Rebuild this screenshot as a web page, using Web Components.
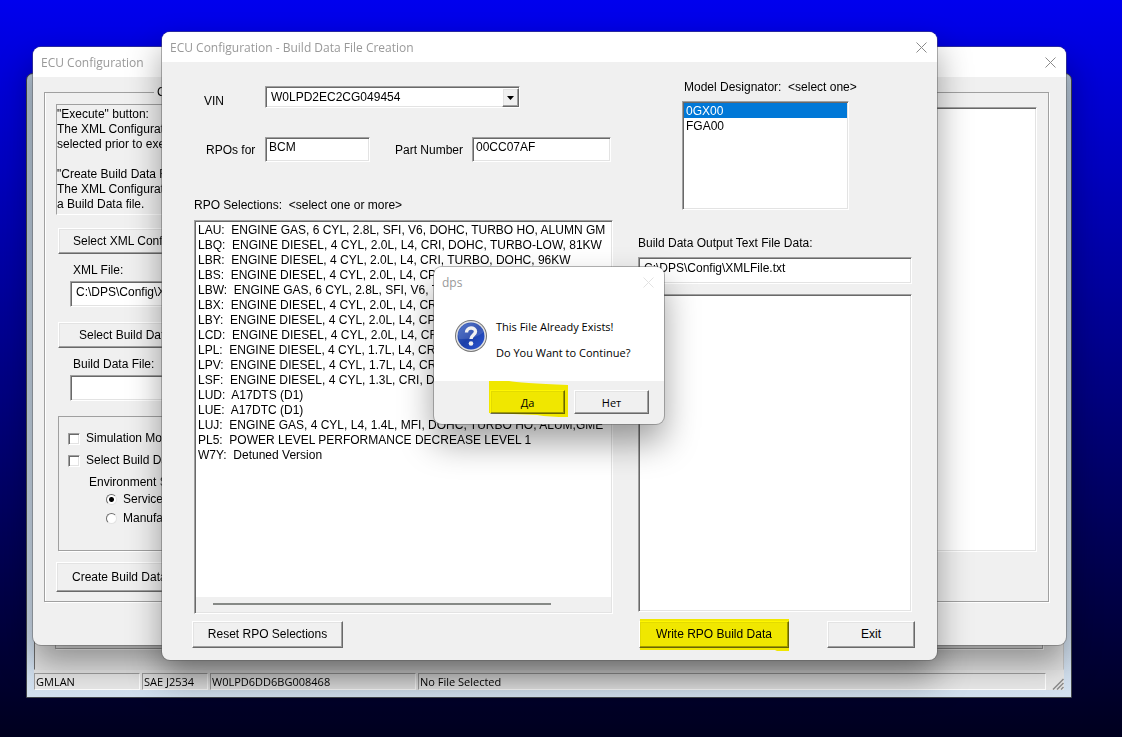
<!DOCTYPE html>
<html lang="en">
<head>
<meta charset="utf-8">
<title>ECU Configuration</title>
<style>
  body {
    margin: 0;
    font: 12px/15px "Liberation Sans", Arial, sans-serif;
    color: #000;
  }
</style>
</head>
<body>
<dps-desktop></dps-desktop>

<script>
// shared by every classic (pre-theme) control
const classic = /*css*/`
  * { box-sizing: border-box; }
  .sunken {
    border: 1px solid;
    border-color: #a0a0a0 #fff #fff #a0a0a0;
    box-shadow: inset 1px 1px 0 #696969, inset -1px -1px 0 #e3e3e3;
    background: #fff;
  }
  .raised {
    border: 1px solid;
    border-color: #fff #696969 #696969 #fff;
    box-shadow: inset -1px -1px 0 #a0a0a0, inset 1px 1px 0 #e3e3e3;
    background: #f0f0f0;
  }
  input, select, textarea, button {
    margin: 0;
    font: inherit;
    color: inherit;
    border-radius: 0;
    outline: none;
  }
  label { white-space: pre; }
`;

class AppWindow extends HTMLElement {
    constructor() {
        super();
        this.attachShadow({ mode: "open" });
        this.shadowRoot.innerHTML = /*html*/`
      <style>
        * { box-sizing: border-box; }
        :host {
          display: block;
          background: #f0f0f0;
          border-radius: 8px;
          box-shadow: 0 0 0 1px rgba(90, 90, 90, .45), 0 18px 34px rgba(0, 0, 0, .38);
        }
        header {
          display: flex;
          align-items: center;
          justify-content: space-between;
          height: 30px;
          padding: 0 8px;
          background: #fff;
          border-radius: 8px 8px 0 0;
          font-family: "Open Sans", "Noto Sans", sans-serif;
          color: #999;
        }
        h1 { margin: 0; font-size: 12px; font-weight: 400; }
        button {
          display: flex;
          padding: 0 2px;
          border: 0;
          background: none;
          color: var(--close, #8a8a8a);
        }
      </style>
      <header>
        <h1></h1>
        <button aria-label="Close">
          <svg width="11" height="11" viewBox="0 0 11 11" fill="none" stroke="currentColor">
            <path d="M.5.5l10 10M10.5.5l-10 10"/>
          </svg>
        </button>
      </header>
      <slot></slot>
    `;
    }

    connectedCallback() {
        this.shadowRoot.querySelector("h1").textContent = this.getAttribute("heading");
    }
}
customElements.define("app-window", AppWindow);

class ClassicButton extends HTMLElement {
    constructor() {
        super();
        this.attachShadow({ mode: "open" });
        this.shadowRoot.innerHTML = /*html*/`
      <style>
        ${classic}
        :host { display: block; position: relative; height: 27px; }
        button {
          width: 100%;
          height: 100%;
          padding: 0 var(--pad, 0);
          text-align: var(--align, center);
          white-space: nowrap;
        }
        /* highlighter stroke laid over the button */
        svg {
          position: absolute;
          inset: var(--marker-inset);
          width: var(--marker-width);
          height: var(--marker-height);
          fill: #fff600;
          mix-blend-mode: multiply;
          pointer-events: none;
        }
      </style>
      <button class="raised"><slot></slot></button>
    `;
    }

    connectedCallback() {
        const marker = this.getAttribute("marker");
        if (!marker) return;
        this.shadowRoot.querySelector("button").insertAdjacentHTML("afterend",
            `<svg aria-hidden="true"><path d="${marker}"/></svg>`);
    }
}
customElements.define("classic-button", ClassicButton);

class TextField extends HTMLElement {
    constructor() {
        super();
        this.attachShadow({ mode: "open" });
        this.shadowRoot.innerHTML = /*html*/`
      <style>
        ${classic}
        :host { display: flex; align-items: center; }
        :host([stacked]) { flex-direction: column; align-items: stretch; }
        label { flex: none; width: var(--label-width, auto); padding-top: 2px; }
        input {
          flex: none;
          width: var(--field-width, 100%);
          height: var(--field-height, 25px);
          padding: 1px 3px 6px;
        }
        :host([stacked]) label { padding: 0 0 0 var(--label-indent, 0); margin-bottom: var(--gap, 6px); }
        :host([stacked]) input { padding: 1px 5px 6px; }
      </style>
      <label for="field"></label>
      <input id="field" class="sunken" type="text">
    `;
    }

    connectedCallback() {
        this.shadowRoot.querySelector("label").textContent = this.getAttribute("label");
        this.shadowRoot.querySelector("input").value = this.getAttribute("value") || "";
    }
}
customElements.define("text-field", TextField);

class ComboField extends HTMLElement {
    constructor() {
        super();
        this.attachShadow({ mode: "open" });
        this.shadowRoot.innerHTML = /*html*/`
      <style>
        ${classic}
        :host { display: flex; align-items: flex-start; }
        label { width: var(--label-width); padding-top: 8px; }
        .box { display: grid; width: 255px; height: 22px; }
        .box > * { grid-area: 1 / 1; }
        select { appearance: none; padding: 0 20px 0 5px; }
        .arrow {
          display: grid;
          place-items: center;
          justify-self: end;
          width: 17px;
          margin: 2px 1px 1px;
          pointer-events: none;
        }
      </style>
      <label for="field"></label>
      <div class="box">
        <select id="field" class="sunken"></select>
        <span class="arrow raised">
          <svg width="7" height="4" viewBox="0 0 7 4"><path d="M0 0h7L3.500 4z"/></svg>
        </span>
      </div>
    `;
    }

    connectedCallback() {
        this.shadowRoot.querySelector("label").textContent = this.getAttribute("label");
        this.shadowRoot.querySelector("select").add(new Option(this.getAttribute("value")));
    }
}
customElements.define("combo-field", ComboField);

class ListField extends HTMLElement {
    constructor() {
        super();
        this.attachShadow({ mode: "open" });
        this.shadowRoot.innerHTML = /*html*/`
      <style>
        ${classic}
        :host { display: flex; flex-direction: column; }
        label { margin-bottom: var(--gap, 6px); padding-left: var(--label-indent, 0); }
        .box { display: flex; flex-direction: column; flex: 1; min-height: 108px; padding: 1px; }
        select {
          flex: 1;
          width: 100%;
          border: 0;
          padding: 0;
          overflow: hidden;
          background: none;
        }
        option { min-height: 15px; padding: 1px 2px 0; }
        option:checked { color: #fff; background: #0078d7 linear-gradient(#0078d7, #0078d7); }
        .scroll { display: none; height: 15px; padding: 6px 60px 0 17px; background: #f0f0f0; }
        .scroll i { display: block; height: 2px; background: #868986; }
        :host([scroll]) .scroll { display: block; }
      </style>
      <label for="list"></label>
      <div class="box sunken">
        <select id="list" multiple size="4"></select>
        <div class="scroll"><i></i></div>
      </div>
    `;
    }

    connectedCallback() {
        this.shadowRoot.querySelector("label").textContent = this.getAttribute("label");
        const list = this.shadowRoot.querySelector("select");
        for (const item of this.querySelectorAll("data")) {
            const option = new Option(item.value.replace(": ", ":\u00a0 "));
            option.selected = item.hasAttribute("selected");
            list.add(option);
        }
    }
}
customElements.define("list-field", ListField);

class CheckField extends HTMLElement {
    constructor() {
        super();
        this.attachShadow({ mode: "open" });
        this.shadowRoot.innerHTML = /*html*/`
      <style>
        ${classic}
        :host { display: block; }
        label { display: flex; align-items: center; gap: 6px; }
        input { appearance: none; width: 12px; height: 12px; }
      </style>
      <label><input type="checkbox" class="sunken"><slot></slot></label>
    `;
    }
}
customElements.define("check-field", CheckField);

class EnvironmentChoice extends HTMLElement {
    constructor() {
        super();
        this.attachShadow({ mode: "open" });
        this.shadowRoot.innerHTML = /*html*/`
      <style>
        ${classic}
        :host { display: block; }
        fieldset { margin: 0; padding: 0; border: 0; }
        legend { padding: 0; }
        label { display: flex; align-items: center; gap: 6px; height: 19px; padding-left: 17px; }
        input {
          appearance: none;
          width: 11px;
          height: 11px;
          border: 1px solid;
          border-color: #6d6d6d #e3e3e3 #e3e3e3 #6d6d6d;
          border-radius: 50%;
          background: #fff;
        }
        input:checked { background: radial-gradient(circle, #000 2px, #fff 3px); }
      </style>
      <fieldset>
        <legend>Environment Set:</legend>
        <label><input type="radio" name="env" checked>Service</label>
        <label><input type="radio" name="env">Manufacturing</label>
      </fieldset>
    `;
    }
}
customElements.define("environment-choice", EnvironmentChoice);

class MainFrame extends HTMLElement {
    constructor() {
        super();
        this.attachShadow({ mode: "open" });
        this.shadowRoot.innerHTML = /*html*/`
      <style>
        * { box-sizing: border-box; }
        :host {
          display: flex;
          flex-direction: column;
          padding: 8px 7px 7px;
          background: linear-gradient(#b6c6d6, #d3e1f0);
          border: 1px solid #43474c;
          border-radius: 7px 7px 0 0;
          font-family: "Open Sans", "Noto Sans", sans-serif;
          font-size: 11px;
        }
        .client {
          flex: 1;
          padding: 20px;
          border: 1px solid;
          border-color: #6d6d6d #c8c8c8 #e3e3e3 #6d6d6d;
          background: #e4e4e4;
        }
        .group { height: 100%; border: 1px solid #a0a0a0; box-shadow: 1px 1px 0 #fff; }
        footer {
          display: grid;
          grid-template-columns: 106px 66px 206px 1fr 16px;
          gap: 2px;
          height: 20px;
          padding-top: 3px;
          background: #e8e8e8;
        }
        span {
          padding-left: 1px;
          border: 1px solid;
          border-color: #a0a0a0 #fff #fff #a0a0a0;
          white-space: nowrap;
        }
        svg { align-self: end; justify-self: end; stroke: #8c8c8c; }
      </style>
      <div class="client"><div class="group"></div></div>
      <footer>
        <span>GMLAN</span>
        <span>SAE J2534</span>
        <span>W0LPD6DD6BG008468</span>
        <span>No File Selected</span>
        <svg width="12" height="12" viewBox="0 0 12 12"><path d="M1 11.500L11.500 1M5 11.500L11.500 5M9 11.500L11.500 9" stroke-width="1.500"/></svg>
      </footer>
    `;
    }
}
customElements.define("main-frame", MainFrame);

class ConfigPanel extends HTMLElement {
    constructor() {
        super();
        this.attachShadow({ mode: "open" });
        this.shadowRoot.innerHTML = /*html*/`
      <style>
        ${classic}
        :host { display: block; padding: 8px 17px 43px 11px; }
        fieldset {
          display: flex;
          gap: 12px;
          margin: 0;
          padding: 4px 11px 9px;
          border: 1px solid #a0a0a0;
          box-shadow: 1px 1px 0 #fff, inset 1px 0 0 #fff;
        }
        legend { margin-left: 98px; padding: 0 3px; }
        .tools { display: flex; flex-direction: column; width: 350px; }
        .help {
          height: 111px;
          margin: 0 0 13px;
          padding: 2px 0 0;
          border: 1px solid;
          border-color: #a0a0a0 #fff #fff #a0a0a0;
          white-space: pre;
        }
        classic-button { --align: left; --pad: 14px; height: 26px; width: 300px; margin-left: 2px; }
        .build { --pad: 20px; }
        .create { --pad: 15px; height: 30px; margin-left: 0; }
        text-field { --label-indent: 3px; --gap: 3px; --field-height: 26px; margin: 9px 0 15px 14px; }
        .options {
          display: flex;
          flex-direction: column;
          gap: 7px;
          height: 135px;
          margin: 0 0 11px 2px;
          padding: 14px 9px;
          border: 1px solid #a0a0a0;
          box-shadow: 1px 1px 0 #fff;
        }
        environment-choice { margin-left: 21px; }
        textarea { flex: 1; height: 445px; margin-top: 3px; resize: none; }
      </style>
      <fieldset>
        <legend>Config</legend>
        <div class="tools">
          <p class="help">"Execute" button:
The XML Configuration
selected prior to exec.

"Create Build Data File"
The XML Configuration
a Build Data file.</p>
          <classic-button>Select XML Config File</classic-button>
          <text-field stacked label="XML File:" value="C:\\DPS\\Config\\XMLFile.txt"></text-field>
          <classic-button class="build">Select Build Data File</classic-button>
          <text-field stacked label="Build Data File:"></text-field>
          <div class="options">
            <check-field>Simulation Mode</check-field>
            <check-field>Select Build Data</check-field>
            <environment-choice></environment-choice>
          </div>
          <classic-button class="create">Create Build Data File</classic-button>
        </div>
        <textarea class="sunken" aria-label="Output"></textarea>
      </fieldset>
    `;
    }
}
customElements.define("config-panel", ConfigPanel);

class BuildPanel extends HTMLElement {
    constructor() {
        super();
        this.attachShadow({ mode: "open" });
        this.shadowRoot.innerHTML = /*html*/`
      <style>
        ${classic}
        :host { display: block; padding: 17px 22px 12px 30px; }
        .columns {
          display: grid;
          grid-template-columns: minmax(0, 1fr) 274px;
          gap: 25px;
          padding: 0 3px 0 2px;
        }
        .left, .right { display: flex; flex-direction: column; }
        .left { padding-top: 7px; }
        .right { padding-top: 1px; }
        combo-field { --label-width: 61px; padding-left: 10px; }
        .pair { display: flex; gap: 25px; padding: 28px 0 36px 12px; }
        .module { --label-width: 59px; --field-width: 105px; }
        .part { --label-width: 77px; --field-width: 139px; }
        .rpo { --gap: 7px; height: 416px; }
        .model { --label-indent: 2px; width: 167px; height: 130px; margin: 0 0 26px 44px; }
        .output { --field-height: 27px; }
        textarea { flex: 1; margin: 10px 0 2px; resize: none; }
        footer {
          display: grid;
          grid-template-columns: 151px 1fr 150px 88px;
          column-gap: 38px;
          margin-top: 7px;
        }
        .write {
          grid-column: 3;
          --marker-inset: -2px auto auto 1px;
          --marker-width: 149px;
          --marker-height: 32px;
        }
      </style>
      <div class="columns">
        <div class="left">
          <combo-field label="VIN" value="W0LPD2EC2CG049454"></combo-field>
          <div class="pair">
            <text-field class="module" label="RPOs for" value="BCM"></text-field>
            <text-field class="part" label="Part Number" value="00CC07AF"></text-field>
          </div>
          <list-field class="rpo" scroll label="RPO Selections:  &lt;select one or more&gt;">
            <data value="LAU: ENGINE GAS, 6 CYL, 2.8L, SFI, V6, DOHC, TURBO HO, ALUMN GM"></data>
            <data value="LBQ: ENGINE DIESEL, 4 CYL, 2.0L, L4, CRI, DOHC, TURBO-LOW, 81KW"></data>
            <data value="LBR: ENGINE DIESEL, 4 CYL, 2.0L, L4, CRI, TURBO, DOHC, 96KW"></data>
            <data value="LBS: ENGINE DIESEL, 4 CYL, 2.0L, L4, CPI"></data>
            <data value="LBW: ENGINE GAS, 6 CYL, 2.8L, SFI, V6, TURBO"></data>
            <data value="LBX: ENGINE DIESEL, 4 CYL, 2.0L, L4, CRI"></data>
            <data value="LBY: ENGINE DIESEL, 4 CYL, 2.0L, L4, CPI"></data>
            <data value="LCD: ENGINE DIESEL, 4 CYL, 2.0L, L4, CRI"></data>
            <data value="LPL: ENGINE DIESEL, 4 CYL, 1.7L, L4, CRI"></data>
            <data value="LPV: ENGINE DIESEL, 4 CYL, 1.7L, L4, CRI"></data>
            <data value="LSF: ENGINE DIESEL, 4 CYL, 1.3L, CRI, DOHC"></data>
            <data value="LUD: A17DTS (D1)"></data>
            <data value="LUE: A17DTC (D1)"></data>
            <data value="LUJ: ENGINE GAS, 4 CYL, L4, 1.4L, MFI, DOHC, TURBO HO, ALUM,GME"></data>
            <data value="PL5: POWER LEVEL PERFORMANCE DECREASE LEVEL 1"></data>
            <data value="W7Y: Detuned Version"></data>
          </list-field>
        </div>
        <div class="right">
          <list-field class="model" label="Model Designator:  &lt;select one&gt;">
            <data value="0GX00" selected></data>
            <data value="FGA00"></data>
          </list-field>
          <text-field class="output" stacked label="Build Data Output Text File Data:" value="C:\\DPS\\Config\\XMLFile.txt"></text-field>
          <textarea class="sunken" aria-label="Build data"></textarea>
        </div>
      </div>
      <footer>
        <classic-button>Reset RPO Selections</classic-button>
        <classic-button class="write" marker="M0 0h149v32h-12l-2-1H0z">Write RPO Build Data</classic-button>
        <classic-button>Exit</classic-button>
      </footer>
    `;
    }
}
customElements.define("build-panel", BuildPanel);

class ConfirmPanel extends HTMLElement {
    constructor() {
        super();
        this.attachShadow({ mode: "open" });
        this.shadowRoot.innerHTML = /*html*/`
      <style>
        :host { display: block; font-family: "Open Sans", "Noto Sans", sans-serif; font-size: 11px; }
        .message {
          display: flex;
          align-items: center;
          gap: 8px;
          height: 84px;
          padding-left: 20px;
          background: #fff;
        }
        p { margin: 0 0 11px; white-space: nowrap; }
        p + p { margin: 0; }
        svg { margin-bottom: 7px; }
        footer {
          display: flex;
          justify-content: flex-end;
          gap: 9px;
          padding: 9px 15px 10px;
        }
        classic-button { width: 75px; height: 24px; }
        .yes {
          --marker-inset: -9px auto auto -1px;
          --marker-width: 79px;
          --marker-height: 36px;
        }
      </style>
      <div class="message">
        <svg width="34" height="34" viewBox="0 0 34 34" aria-hidden="true">
          <defs>
            <linearGradient id="ball" x1="0" y1="0" x2="1" y2="1">
              <stop offset="0" stop-color="#3f66c4"/>
              <stop offset=".5" stop-color="#1c3fa8"/>
              <stop offset="1" stop-color="#2c57d6"/>
            </linearGradient>
          </defs>
          <circle cx="17" cy="17" r="16" fill="#777"/>
          <circle cx="17" cy="17" r="15" fill="#e4e4e4"/>
          <circle cx="17" cy="17" r="13.500" fill="url(#ball)"/>
          <path d="M4 15A13.500 13.500 0 0 1 30 13Q20 21 5 20Z" fill="#fff" opacity=".13"/>
          <path d="M12.500 13.500C12.500 7.500 21.500 8 21.500 12.500C21.500 16 17 16 17 20" fill="none" stroke="#f2f2f2" stroke-width="3.400"/>
          <circle cx="17" cy="24.500" r="2.300" fill="#f2f2f2"/>
        </svg>
        <div class="text">
          <p>This File Already Exists!</p>
          <p>Do You Want to Continue?</p>
        </div>
      </div>
      <footer>
        <classic-button class="yes" marker="M0 0H20Q30 2 79 4V36Q60 36 48 34L0 32Z">Да</classic-button>
        <classic-button>Нет</classic-button>
      </footer>
    `;
    }
}
customElements.define("confirm-panel", ConfirmPanel);

class DpsDesktop extends HTMLElement {
    constructor() {
        super();
        this.attachShadow({ mode: "open" });
        this.shadowRoot.innerHTML = /*html*/`
      <style>
        :host {
          display: block;
          position: relative;
          min-height: 100vh;
          overflow: hidden;
          background: linear-gradient(#0000ee, #00001e);
        }
        /* windows float freely over the desktop, back to front */
        main-frame, app-window { position: absolute; box-sizing: border-box; }
        main-frame { inset: 73px 50px 39px 26px; }
        .config { inset: 47px 56px auto 33px; }
        .build { inset: 32px 185px auto 162px; }
        .confirm { top: 267px; left: 434px; width: 230px; --close: #e2e2e2; }
      </style>
      <main-frame></main-frame>
      <app-window class="config" heading="ECU Configuration"><config-panel></config-panel></app-window>
      <app-window class="build" heading="ECU Configuration - Build Data File Creation"><build-panel></build-panel></app-window>
      <app-window class="confirm" heading="dps"><confirm-panel></confirm-panel></app-window>
    `;
    }
}
customElements.define("dps-desktop", DpsDesktop);
</script>
</body>
</html>
